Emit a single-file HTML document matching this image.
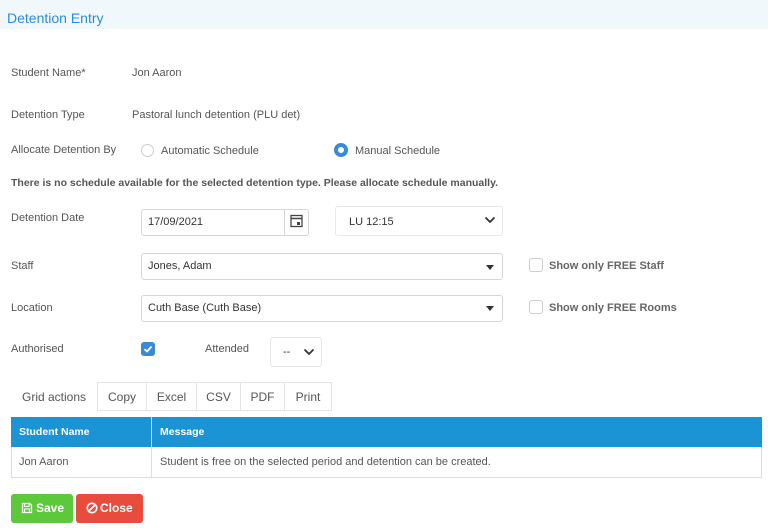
<!DOCTYPE html>
<html><head><style>
*{box-sizing:border-box;margin:0;padding:0}
body{width:768px;height:531px;background:#fff;font-family:"Liberation Sans",sans-serif;font-size:11px;color:#555;position:relative;overflow:hidden}
.a{position:absolute;white-space:nowrap}
.hdr{position:absolute;left:0;top:0;width:768px;height:29px;background:#f0f8fc}
.box{position:absolute;border:1px solid #d6d6d6;border-radius:3px;background:#fff}
.cb{position:absolute;width:14px;height:14px;border:1px solid #ccc;border-radius:3px;background:#fff}
.tri{position:absolute;width:0;height:0;border-left:4px solid transparent;border-right:4px solid transparent;border-top:5px solid #333}
.gb{position:absolute;top:382px;height:29px;border:1px solid #e4e4e4;line-height:28px;text-align:center;font-size:12px;color:#555;background:#fff}
</style></head><body>
<div class="hdr"></div>
<div class="a" style="left:7px;top:10px;font-size:14px;color:#2a8fd4">Detention Entry</div>

<div class="a" style="left:11px;top:67px">Student Name*</div>
<div class="a" style="left:132px;top:67px">Jon Aaron</div>
<div class="a" style="left:11px;top:109px">Detention Type</div>
<div class="a" style="left:132px;top:109px">Pastoral lunch detention (PLU det)</div>

<div class="a" style="left:11px;top:144px">Allocate Detention By</div>
<div class="a" style="left:141px;top:144px;width:13px;height:13px;border:1px solid #ccc;border-radius:50%"></div>
<div class="a" style="left:161px;top:145px">Automatic Schedule</div>
<div class="a" style="left:334px;top:143px;width:14px;height:14px;border:4px solid #3a8ad6;border-radius:50%"></div>
<div class="a" style="left:355px;top:145px">Manual Schedule</div>

<div class="a" style="left:11px;top:177px;color:#555;font-weight:bold;font-size:10.5px">There is no schedule available for the selected detention type. Please allocate schedule manually.</div>

<div class="a" style="left:11px;top:212px">Detention Date</div>
<div class="box" style="left:141px;top:209px;width:168px;height:27px"></div>
<div class="a" style="left:284px;top:210px;width:1px;height:25px;background:#d6d6d6"></div>
<div class="a" style="left:148px;top:216px;color:#333">17/09/2021</div>
<svg class="a" style="left:290px;top:214px" width="13" height="14" viewBox="0 0 13 14"><rect x="1" y="1.5" width="11" height="11" fill="none" stroke="#444" stroke-width="1.3"/><line x1="1" y1="4.5" x2="12" y2="4.5" stroke="#444" stroke-width="1.5"/><rect x="7" y="8" width="3" height="3" fill="#444"/></svg>
<div class="box" style="left:335px;top:206px;width:168px;height:30px;border-color:#e8e8e8"></div>
<div class="a" style="left:349px;top:216px;color:#333">LU 12:15</div>
<svg class="a" style="left:484px;top:216px" width="12" height="8" viewBox="0 0 12 8"><path d="M1.5 1.5L6 6L10.5 1.5" fill="none" stroke="#333" stroke-width="1.8"/></svg>

<div class="a" style="left:11px;top:260px">Staff</div>
<div class="box" style="left:141px;top:253px;width:362px;height:27px"></div>
<div class="a" style="left:148px;top:260px;color:#333">Jones, Adam</div>
<div class="tri" style="left:486px;top:265px"></div>
<div class="cb" style="left:529px;top:258px"></div>
<div class="a" style="left:549px;top:260px;font-weight:bold;color:#666">Show only FREE Staff</div>

<div class="a" style="left:11px;top:302px">Location</div>
<div class="box" style="left:141px;top:295px;width:362px;height:27px"></div>
<div class="a" style="left:148px;top:302px;color:#333">Cuth Base (Cuth Base)</div>
<div class="tri" style="left:486px;top:306px"></div>
<div class="cb" style="left:529px;top:300px"></div>
<div class="a" style="left:549px;top:302px;font-weight:bold;color:#666">Show only FREE Rooms</div>

<div class="a" style="left:11px;top:343px">Authorised</div>
<div class="a" style="left:141px;top:342px;width:14px;height:14px;background:#3a8ad6;border-radius:3px"></div>
<svg class="a" style="left:141px;top:342px" width="14" height="14" viewBox="0 0 14 14"><path d="M3.5 7.2L6 9.5L10.5 4.5" fill="none" stroke="#fff" stroke-width="1.8"/></svg>
<div class="a" style="left:205px;top:343px">Attended</div>
<div class="box" style="left:270px;top:337px;width:52px;height:30px;border-color:#e8e8e8"></div>
<div class="a" style="left:283px;top:346px;color:#333">--</div>
<svg class="a" style="left:303px;top:348px" width="12" height="8" viewBox="0 0 12 8"><path d="M1.5 1.5L6 6L10.5 1.5" fill="none" stroke="#333" stroke-width="1.8"/></svg>

<div class="a" style="left:22px;top:390px;font-size:12px">Grid actions</div>
<div class="gb" style="left:97px;width:50px">Copy</div>
<div class="gb" style="left:146px;width:51px">Excel</div>
<div class="gb" style="left:196px;width:45px">CSV</div>
<div class="gb" style="left:240px;width:45px">PDF</div>
<div class="gb" style="left:284px;width:48px">Print</div>

<div class="a" style="left:11px;top:417px;width:751px;height:61px;border:1px solid #ddd"></div>
<div class="a" style="left:11px;top:417px;width:751px;height:30px;background:#1a94d4"></div>
<div class="a" style="left:151px;top:417px;width:1px;height:61px;background:#ddd"></div>
<div class="a" style="left:19px;top:426px;color:#fff;font-weight:bold;font-size:10.5px">Student Name</div>
<div class="a" style="left:160px;top:426px;color:#fff;font-weight:bold;font-size:10.5px">Message</div>
<div class="a" style="left:19px;top:456px">Jon Aaron</div>
<div class="a" style="left:160px;top:456px">Student is free on the selected period and detention can be created.</div>

<div class="a" style="left:11px;top:494px;width:62px;height:29px;background:#5cc93a;border-radius:3px"></div>
<svg class="a" style="left:21px;top:502px" width="12" height="12" viewBox="0 0 12 12"><path d="M1.5 1.5H9L10.5 3V10.5H1.5Z" fill="none" stroke="#fff" stroke-width="1.3"/><rect x="3.5" y="1.5" width="4.5" height="3" fill="none" stroke="#fff" stroke-width="1.1"/><rect x="3.5" y="7" width="5" height="3.5" fill="none" stroke="#fff" stroke-width="1.1"/></svg>
<div class="a" style="left:36px;top:501px;color:#fff;font-weight:bold;font-size:12px">Save</div>
<div class="a" style="left:76px;top:494px;width:67px;height:29px;background:#e74c3c;border-radius:3px"></div>
<svg class="a" style="left:86px;top:502px" width="12" height="12" viewBox="0 0 12 12"><circle cx="6" cy="6" r="4.7" fill="none" stroke="#fff" stroke-width="1.6"/><line x1="3" y1="9" x2="9" y2="3" stroke="#fff" stroke-width="1.6"/></svg>
<div class="a" style="left:100px;top:501px;color:#fff;font-weight:bold;font-size:12px">Close</div>
</body></html>
